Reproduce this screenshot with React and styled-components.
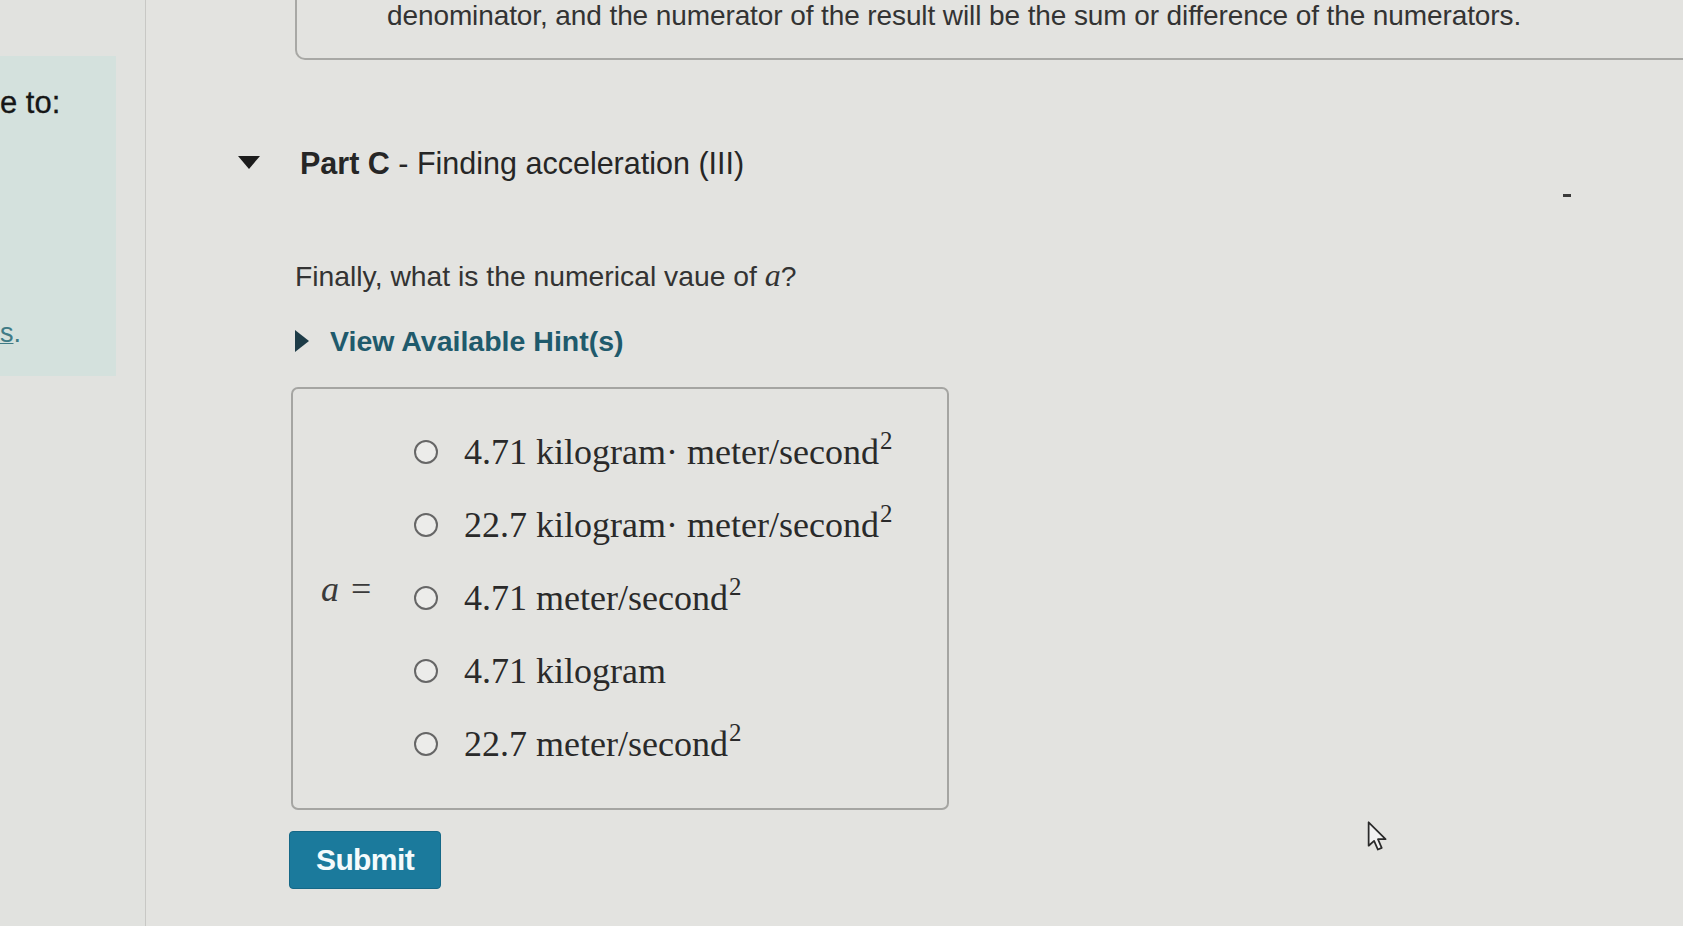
import React from 'react';
import styled, { createGlobalStyle } from 'styled-components';

const GlobalStyle = createGlobalStyle`
  html, body {
    margin: 0;
    padding: 0;
  }
  body {
    background: #e3e3e0;
    font-family: "Liberation Sans", Arial, sans-serif;
    color: #2b2b2b;
    overflow: hidden;
  }
`;

const Page = styled.div`
  display: flex;
  width: 1683px;
  height: 926px;
  overflow: hidden;
  position: relative;
`;

const SideColumn = styled.aside`
  width: 146px;
  flex: none;
  box-sizing: border-box;
  border-right: 1px solid #c8c8c5;
  padding-top: 56px;
  background: #e1e2df;
`;

const GoalPanel = styled.div`
  width: 116px;
  height: 320px;
  background: #d4e1dd;
  overflow: hidden;
  display: flex;
  flex-direction: column;
  padding-top: 31px;
  box-sizing: border-box;
`;

const GoalText = styled.div`
  font-size: 31px;
  line-height: 32px;
  color: #161616;
  white-space: nowrap;
  -webkit-text-stroke: 0.3px #161616;
`;

const GoalLinkLine = styled.div`
  margin-top: 199px;
  font-size: 27px;
  line-height: 30px;
  color: #3f7b86;
`;

const GoalLink = styled.a`
  color: inherit;
  text-decoration: underline;
  text-decoration-thickness: 1px;
`;

const Main = styled.main`
  flex: 1;
  padding-left: 149px;
  display: flex;
  flex-direction: column;
  align-items: flex-start;
`;

const TopNote = styled.div`
  align-self: stretch;
  margin-top: -32px;
  margin-right: -20px;
  padding: 30px 0 26px 90px;
  border: 2px solid #a8a8a5;
  border-radius: 10px;
  font-size: 28px;
  line-height: 32px;
  color: #333;
  white-space: nowrap;
  letter-spacing: -0.1px;
`;

const PartHeading = styled.h2`
  display: flex;
  align-items: center;
  gap: 40px;
  margin: 85px 0 0 -57px;
  font-size: 30.5px;
  line-height: 36px;
  font-weight: 400;
  color: #262626;
`;

const Bold = styled.b`
  font-weight: 700;
`;

const Question = styled.p`
  margin: 78px 0 0 0;
  font-size: 28.3px;
  line-height: 32px;
  color: #333;
`;

const MathVar = styled.i`
  font-family: "Liberation Serif", "Times New Roman", serif;
  font-size: 32px;
`;

const HintToggle = styled.div`
  display: flex;
  align-items: center;
  gap: 21px;
  margin: 33px 0 0 0;
  font-size: 28.5px;
  line-height: 32px;
  font-weight: 700;
  color: #1f5a6c;
`;

const AnswerBox = styled.div`
  margin: 30px 0 0 -4px;
  width: 658px;
  height: 423px;
  box-sizing: border-box;
  border: 2px solid #a5a5a2;
  border-radius: 7px;
  padding: 26px 0 0 28px;
  display: flex;
  align-items: flex-start;
`;

const VarLabel = styled.div`
  width: 93px;
  flex: none;
  align-self: center;
  margin-top: -46px;
  font-family: "Liberation Serif", "Times New Roman", serif;
  font-size: 36px;
  color: #3a3a3a;
  white-space: nowrap;
  word-spacing: 3px;
`;

const Options = styled.div`
  display: flex;
  flex-direction: column;
`;

const OptionRow = styled.label`
  display: flex;
  align-items: center;
  gap: 26px;
  height: 73px;
  font-family: "Liberation Serif", "Times New Roman", serif;
  font-size: 36px;
  color: #2a2a2a;
  white-space: nowrap;
`;

const Radio = styled.span`
  width: 20px;
  height: 20px;
  flex: none;
  border: 2.5px solid #666;
  border-radius: 50%;
  background: #ececea;
`;

const Sup = styled.sup`
  font-size: 25px;
  line-height: 0;
  vertical-align: 0;
  position: relative;
  top: -15px;
  margin-left: 1px;
`;

const SubmitButton = styled.button`
  margin: 21px 0 0 -6px;
  width: 152px;
  height: 58px;
  background: #1b7a9c;
  border: 1px solid #156887;
  border-radius: 4px;
  color: #f4fbfc;
  font-family: "Liberation Sans", Arial, sans-serif;
  font-size: 30px;
  font-weight: 700;
  letter-spacing: -0.6px;
`;

const Cursor = styled.svg`
  position: absolute;
  left: 1367px;
  top: 820px;
`;

const Speck = styled.span`
  position: absolute;
  left: 1563px;
  top: 194px;
  width: 8px;
  height: 3px;
  background: #3a3a3a;
`;

const options = [
  { value: '4.71 kilogram· meter/second', sq: true },
  { value: '22.7 kilogram· meter/second', sq: true },
  { value: '4.71 meter/second', sq: true },
  { value: '4.71 kilogram', sq: false },
  { value: '22.7 meter/second', sq: true },
];

export default function App() {
  return (
    <>
      <GlobalStyle />
      <Page>
        <SideColumn>
          <GoalPanel>
            <GoalText>e to:</GoalText>
            <GoalLinkLine>
              <GoalLink>s</GoalLink>.
            </GoalLinkLine>
          </GoalPanel>
        </SideColumn>
        <Main>
          <TopNote>
            denominator, and the numerator of the result will be the sum or difference of the numerators.
          </TopNote>
          <PartHeading>
            <svg width="22" height="14" viewBox="0 0 22 14">
              <path d="M0 0 H22 L11 13 Z" fill="#1c1c1c" />
            </svg>
            <span>
              <Bold>Part C</Bold> - Finding acceleration (III)
            </span>
          </PartHeading>
          <Question>
            Finally, what is the numerical vaue of <MathVar>a</MathVar>?
          </Question>
          <HintToggle>
            <svg width="14" height="22" viewBox="0 0 14 22">
              <path d="M0 0 L14 11 L0 22 Z" fill="#1d3b47" />
            </svg>
            View Available Hint(s)
          </HintToggle>
          <AnswerBox>
            <VarLabel>
              <i>a</i> =
            </VarLabel>
            <Options>
              {options.map((o, i) => (
                <OptionRow key={i}>
                  <Radio />
                  <span>
                    {o.value}
                    {o.sq && <Sup>2</Sup>}
                  </span>
                </OptionRow>
              ))}
            </Options>
          </AnswerBox>
          <SubmitButton>Submit</SubmitButton>
        </Main>
        <Speck />
        <Cursor width="24" height="34" viewBox="0 0 22 30">
          <path
            d="M1.5 1.5 L1.5 23 L6.5 18.5 L10 26.5 L13.5 25 L10 17 L17 17 Z"
            fill="#f2f2f2"
            stroke="#2a2a2a"
            strokeWidth="1.6"
            strokeLinejoin="round"
          />
        </Cursor>
      </Page>
    </>
  );
}
